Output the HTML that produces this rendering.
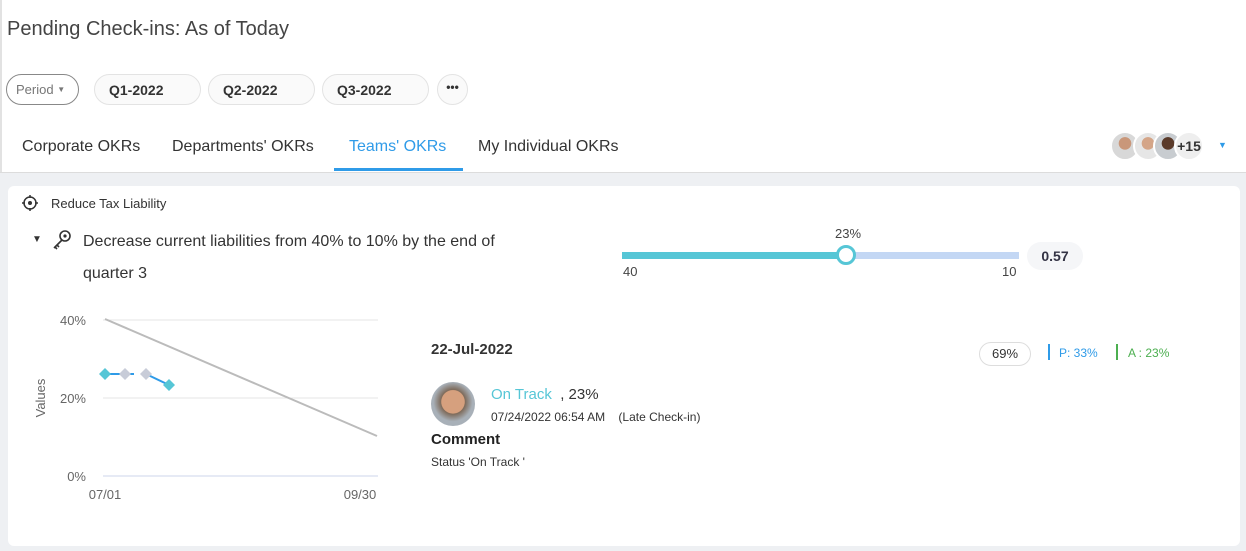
<!DOCTYPE html>
<html><head><style>
*{box-sizing:border-box;margin:0;padding:0}
body{width:1246px;height:551px;overflow:hidden;background:#fff;font-family:"Liberation Sans",sans-serif;color:#333;position:relative}
.abs{position:absolute}
.pill{position:absolute;top:74px;height:31px;border:1px solid #e3e3e3;border-radius:16px;background:#fafafa;font-size:14px;font-weight:bold;color:#333;padding:7px 14px}
.tab{position:absolute;top:138px;font-size:16px;color:#333}
.av{position:absolute;top:131px;width:30px;height:30px;border-radius:50%;border:2px solid #fff}
</style></head><body>
<div class="abs" style="left:0;top:0;width:2px;height:551px;background:#e2e2e2"></div>
<div class="abs" style="left:7px;top:18px;font-size:20px;color:#444">Pending Check-ins: As of Today</div>
<div class="pill" style="left:6px;width:73px;background:#fff;border:1px solid #888;font-weight:normal;color:#777;font-size:13px;padding:7px 9px">Period <span style="font-size:8px;vertical-align:2px">▼</span></div>
<div class="pill" style="left:94px;width:107px">Q1-2022</div>
<div class="pill" style="left:208px;width:107px">Q2-2022</div>
<div class="pill" style="left:322px;width:107px">Q3-2022</div>
<div class="pill" style="left:437px;width:31px;padding:5px 0;text-align:center;font-size:12px">•••</div>
<div class="tab" style="left:22px">Corporate OKRs</div>
<div class="tab" style="left:172px">Departments' OKRs</div>
<div class="tab" style="left:349px;color:#2f9be8">Teams' OKRs</div>
<div class="abs" style="left:334px;top:168px;width:129px;height:3px;background:#2f9be8"></div>
<div class="tab" style="left:478px">My Individual OKRs</div>
<div class="av" style="left:1110px;background:radial-gradient(circle at 50% 40%,#c9977a 30%,#d8d8d8 32%)"></div>
<div class="av" style="left:1133px;background:radial-gradient(circle at 50% 40%,#d4a588 30%,#e6e6e6 32%)"></div>
<div class="av" style="left:1153px;background:radial-gradient(circle at 50% 40%,#5a3a2a 30%,#c8ccd0 32%)"></div>
<div class="av" style="left:1174px;background:#eee;font-size:14px;font-weight:bold;text-align:center;line-height:26px;color:#333">+15</div>
<div class="abs" style="left:1218px;top:140px;font-size:9px;color:#2f9be8">▼</div>
<div class="abs" style="left:0;top:172px;width:1246px;height:379px;background:#eef0f3;border-top:1px solid #dcdcdc"></div>
<div class="abs" style="left:8px;top:186px;width:1232px;height:360px;background:#fff;border-radius:6px"></div>
<svg class="abs" style="left:21px;top:194px" width="18" height="18" viewBox="0 0 18 18"><circle cx="9" cy="9" r="6" fill="none" stroke="#333" stroke-width="1.5"/><circle cx="9" cy="9" r="2" fill="#333"/><path d="M9 1v3M9 14v3M1 9h3M14 9h3" stroke="#333" stroke-width="1.5"/></svg>
<div class="abs" style="left:51px;top:196px;font-size:13px;color:#333">Reduce Tax Liability</div>
<div class="abs" style="left:32px;top:234px;font-size:10px">▼</div>
<svg class="abs" style="left:52px;top:228px" width="22" height="22" viewBox="0 0 22 22"><circle cx="13" cy="8" r="5" fill="none" stroke="#333" stroke-width="1.6"/><circle cx="13" cy="8" r="1.6" fill="#333"/><path d="M10 12L2 20M5 17l2 2M3 19l2 2" stroke="#333" stroke-width="1.6"/></svg>
<div class="abs" style="left:83px;top:226px;font-size:16px;line-height:32px;color:#333;width:440px">Decrease current liabilities from 40% to 10% by the end of quarter 3</div>
<div class="abs" style="left:835px;top:226px;font-size:13px;color:#444">23%</div>
<div class="abs" style="left:622px;top:252px;width:224px;height:7px;background:#56c6d6"></div>
<div class="abs" style="left:846px;top:252px;width:173px;height:7px;background:#c3d7f4"></div>
<div class="abs" style="left:836px;top:245px;width:20px;height:20px;border-radius:50%;border:3px solid #56c6d6;background:#fff"></div>
<div class="abs" style="left:623px;top:264px;font-size:13px;color:#444">40</div>
<div class="abs" style="left:1002px;top:264px;font-size:13px;color:#444">10</div>
<div class="abs" style="left:1027px;top:242px;width:56px;height:28px;border-radius:14px;background:#f5f6f8;font-size:14px;font-weight:bold;color:#334;text-align:center;line-height:28px">0.57</div>
<svg class="abs" style="left:30px;top:300px" width="360" height="210" viewBox="0 0 360 210" font-family="Liberation Sans" font-size="13" fill="#666">
<line x1="73" y1="20" x2="348" y2="20" stroke="#e6e6e6"/>
<line x1="73" y1="98" x2="348" y2="98" stroke="#e6e6e6"/>
<line x1="73" y1="176" x2="348" y2="176" stroke="#ccd6eb"/>
<text x="56" y="25" text-anchor="end">40%</text>
<text x="56" y="103" text-anchor="end">20%</text>
<text x="56" y="181" text-anchor="end">0%</text>
<text x="75" y="199" text-anchor="middle">07/01</text>
<text x="330" y="199" text-anchor="middle">09/30</text>
<text transform="translate(15,98) rotate(-90)" text-anchor="middle">Values</text>
<line x1="75" y1="19" x2="347" y2="136" stroke="#bbb" stroke-width="2"/>
<path d="M75 74H104M116 74L139 85" stroke="#2f9be8" stroke-width="2"/>
<path d="M75 68l6 6-6 6-6-6z" fill="#56c6d6"/>
<path d="M95 68l6 6-6 6-6-6z" fill="#c8ccd8"/>
<path d="M116 68l6 6-6 6-6-6z" fill="#c8ccd8"/>
<path d="M139 79l6 6-6 6-6-6z" fill="#56c6d6"/>
</svg>
<div class="abs" style="left:431px;top:341px;font-size:15px;font-weight:bold;color:#333">22-Jul-2022</div>
<div class="abs" style="left:979px;top:342px;width:52px;height:24px;border:1px solid #ddd;border-radius:12px;font-size:13px;text-align:center;line-height:22px;color:#333">69%</div>
<div class="abs" style="left:1048px;top:344px;width:2px;height:16px;background:#2f9be8"></div>
<div class="abs" style="left:1059px;top:346px;font-size:12px;color:#2f9be8">P: 33%</div>
<div class="abs" style="left:1116px;top:344px;width:2px;height:16px;background:#4caf50"></div>
<div class="abs" style="left:1128px;top:346px;font-size:12px;color:#4caf50">A : 23%</div>
<div class="abs" style="left:431px;top:382px;width:44px;height:44px;border-radius:50%;background:radial-gradient(circle at 50% 45%,#d6a07e 35%,#7d6a5a 37%,#a8b0b8 60%)"></div>
<div class="abs" style="left:491px;top:386px;font-size:15px;color:#56c6d6">On Track <span style="color:#333">&nbsp;, 23%</span></div>
<div class="abs" style="left:491px;top:410px;font-size:12px;color:#333">07/24/2022 06:54 AM &nbsp;&nbsp;&nbsp;(Late Check-in)</div>
<div class="abs" style="left:431px;top:431px;font-size:15px;font-weight:bold;color:#222">Comment</div>
<div class="abs" style="left:431px;top:455px;font-size:12px;color:#333">Status 'On Track '</div>
</body></html>
